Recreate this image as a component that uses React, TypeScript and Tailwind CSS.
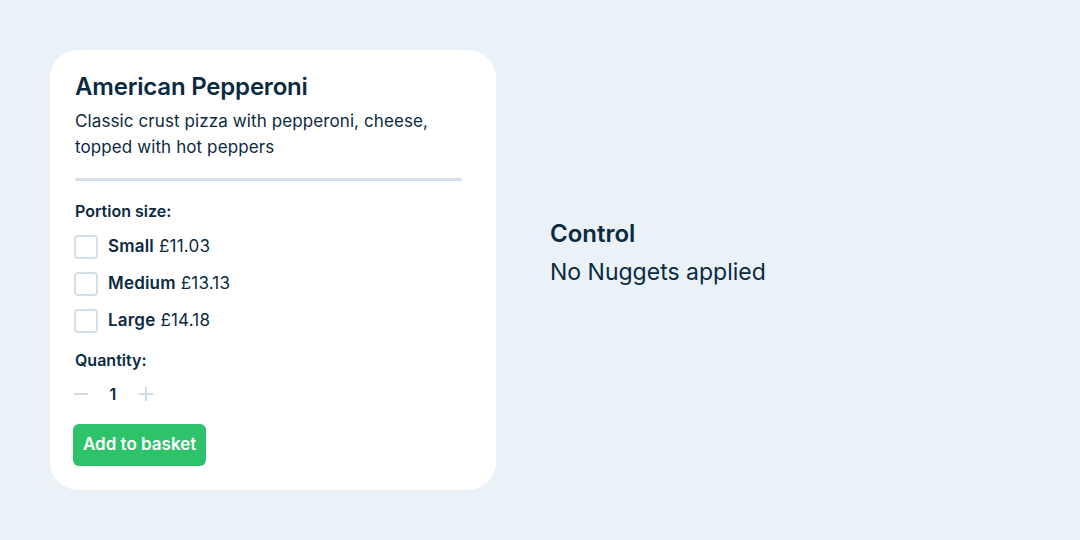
import React from "react";

const ink = "text-[#0b2a3f]";

export default function App() {
  return (
    <div
      className={`w-[1080px] h-[540px] bg-[#eaf2f8] flex items-start ${ink}`}
      style={{ fontFamily: "Inter, 'Noto Sans', sans-serif" }}
    >
      <div className="ml-[50px] mt-[50px] w-[446px] h-[440px] bg-white rounded-[28px] pl-[25px] pr-[34px] pt-[20px]">
        <h1 className="text-[24px] font-semibold leading-[34px] tracking-[-0.2px]">American Pepperoni</h1>
        <p className="text-[17px] leading-[26px] mt-[4px] tracking-[0.1px]">
          Classic crust pizza with pepperoni, cheese,
          <br />
          topped with hot peppers
        </p>
        <div className="h-[3px] bg-[#d3dee6] mt-[18px] rounded-full" />
        <div className="text-[16px] font-semibold leading-[24px] mt-[18px]">Portion size:</div>
        <div className="flex flex-col gap-[13px] mt-[12px]">
          {[
            ["Small", "£11.03"],
            ["Medium", "£13.13"],
            ["Large", "£14.18"],
          ].map(([s, p]) => (
            <div key={s} className="flex items-center gap-[10px] h-[24px]">
              <div className="w-[24px] h-[24px] border-2 border-[#d3dee6] rounded-[4px] -ml-[1px]" />
              <span className="text-[17px] tracking-[0.2px]">
                <span className="font-semibold">{s}</span> {p}
              </span>
            </div>
          ))}
        </div>
        <div className="text-[16px] font-semibold leading-[24px] mt-[15px]">Quantity:</div>
        <div className="flex items-center h-[24px] mt-[10px] -ml-[2px]">
          <svg width="16" height="16" viewBox="0 0 16 16" className="mr-[19px]">
            <line x1="1" y1="8" x2="15" y2="8" stroke="#cfdbe4" strokeWidth="2" />
          </svg>
          <span className="text-[16px] font-semibold w-[10px] text-center">1</span>
          <svg width="16" height="16" viewBox="0 0 16 16" className="ml-[20px]">
            <line x1="1" y1="8" x2="15" y2="8" stroke="#cfdbe4" strokeWidth="2" />
            <line x1="8" y1="1" x2="8" y2="15" stroke="#cfdbe4" strokeWidth="2" />
          </svg>
        </div>
        <button className="mt-[18px] -ml-[2px] h-[42px] px-[10px] bg-[#2ec26a] text-white rounded-[6px] text-[17px] font-semibold">
          Add to basket
        </button>
      </div>
      <div className="ml-[54px] mt-[218px]">
        <div className="text-[24px] font-semibold leading-[32px]">Control</div>
        <div className="text-[23px] leading-[32px] mt-[6px]">No Nuggets applied</div>
      </div>
    </div>
  );
}
